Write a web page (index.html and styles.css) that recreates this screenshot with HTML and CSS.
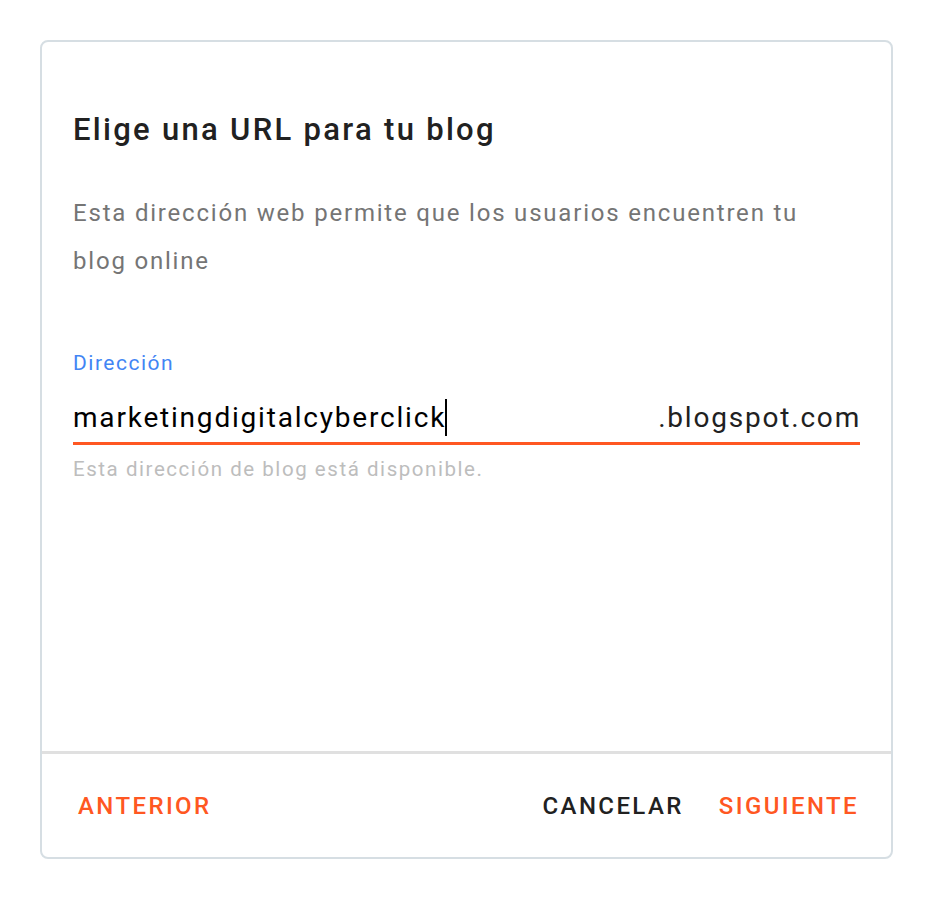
FILE: index.html
```html
<!DOCTYPE html>
<html lang="es">
<head>
<meta charset="utf-8">
<title>Elige una URL para tu blog</title>
<link rel="stylesheet" href="styles.css">
</head>
<body>
<div class="card">
  <div class="content">
    <h1 class="title">Elige una URL para tu blog</h1>
    <p class="desc">Esta dirección web permite que los usuarios encuentren tu blog online</p>
    <div class="field">
      <div class="label">Dirección</div>
      <div class="input-row">
        <span class="value">marketingdigitalcyberclick<span class="caret"></span></span>
        <span class="suffix">.blogspot.com</span>
      </div>
      <div class="helper">Esta dirección de blog está disponible.</div>
    </div>
  </div>
  <div class="footer">
    <span class="btn btn-accent">ANTERIOR</span>
    <div class="right">
      <span class="btn btn-dark">CANCELAR</span>
      <span class="btn btn-accent">SIGUIENTE</span>
    </div>
  </div>
</div>
</body>
</html>
```
FILE: styles.css
```css
html, body {
  margin: 0;
  padding: 0;
  background: #ffffff;
}
body {
  font-family: Roboto, "Liberation Sans", Arial, sans-serif;
  padding: 40px 0 0 40px;
}
.card {
  box-sizing: border-box;
  width: 853px;
  height: 819px;
  border: 2px solid #d6dee3;
  border-radius: 8px;
  display: flex;
  flex-direction: column;
}
.content {
  flex: 1;
  padding: 70px 31px 0 31px;
}
.title {
  margin: 0;
  font-size: 31px;
  line-height: 36px;
  font-weight: 500;
  letter-spacing: 2.3px;
  color: #212121;
}
.desc {
  margin: 41px 0 0 0;
  font-size: 24px;
  line-height: 48px;
  letter-spacing: 1.8px;
  color: #757575;
  max-width: 760px;
}
.field {
  margin-top: 66px;
}
.label {
  font-size: 21px;
  line-height: 24px;
  letter-spacing: 1.5px;
  color: #4285f4;
}
.input-row {
  margin-top: 24px;
  display: flex;
  justify-content: space-between;
  align-items: flex-end;
  padding-bottom: 6px;
  border-bottom: 3px solid #ff5722;
  font-size: 28px;
  line-height: 36px;
  letter-spacing: 1.8px;
}
.value {
  color: #000000;
}
.caret {
  display: inline-block;
  width: 1.5px;
  height: 37px;
  background: #000000;
  vertical-align: -9px;
  margin-left: -1px;
}
.suffix {
  color: #212121;
  margin-right: -1px;
}
.helper {
  margin-top: 12px;
  font-size: 20.5px;
  line-height: 24px;
  letter-spacing: 1.55px;
  color: #bdbdbd;
}
.footer {
  border-top: 3px solid #e0e0e0;
  height: 103px;
  display: flex;
  align-items: center;
  justify-content: space-between;
  padding: 0 32px 0 36px;
}
.right {
  display: flex;
  gap: 35px;
}
.btn {
  font-size: 24px;
  font-weight: 500;
  line-height: 28px;
  letter-spacing: 2.4px;
}
.btn-accent {
  color: #ff5722;
}
.btn-dark {
  color: #212121;
}
```
